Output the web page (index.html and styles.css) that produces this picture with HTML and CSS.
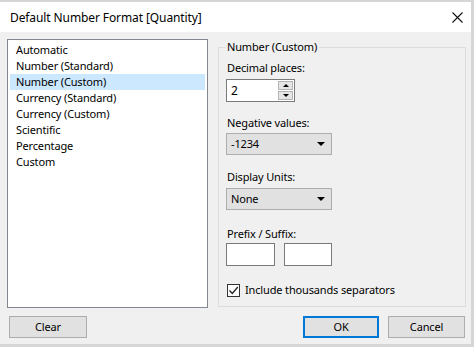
FILE: index.html
```html
<!DOCTYPE html>
<html lang="en">
<head>
<meta charset="utf-8">
<title>Default Number Format [Quantity]</title>
<link rel="stylesheet" href="styles.css">
</head>
<body>
<div class="window">
  <div class="titlebar">
    <span class="title">Default Number Format [Quantity]</span>
    <span class="close" aria-label="Close">
      <svg width="11" height="11" viewBox="0 0 11 11"><path d="M0.5 0.5 L10.5 10.5 M10.5 0.5 L0.5 10.5" stroke="#111" stroke-width="1.1" fill="none"/></svg>
    </span>
  </div>
  <div class="content">
    <div class="main">
      <ul class="listbox">
        <li>Automatic</li>
        <li>Number (Standard)</li>
        <li class="selected">Number (Custom)</li>
        <li>Currency (Standard)</li>
        <li>Currency (Custom)</li>
        <li>Scientific</li>
        <li>Percentage</li>
        <li>Custom</li>
      </ul>
      <fieldset class="group">
        <legend>Number (Custom)</legend>
        <div class="label l-decimal">Decimal places:</div>
        <div class="spinner">
          <span class="spin-value">2</span>
          <span class="spin-buttons">
            <span class="spin-btn"><span class="tri-up"></span></span>
            <span class="spin-btn"><span class="tri-down"></span></span>
          </span>
        </div>
        <div class="label l-negative">Negative values:</div>
        <div class="combo c-negative"><span class="combo-value">-1234</span><span class="tri-down combo-arrow"></span></div>
        <div class="label l-units">Display Units:</div>
        <div class="combo c-units"><span class="combo-value">None</span><span class="tri-down combo-arrow"></span></div>
        <div class="label l-prefix">Prefix / Suffix:</div>
        <div class="affix-row">
          <span class="textbox tb-prefix"></span>
          <span class="textbox tb-suffix"></span>
        </div>
        <div class="check-row">
          <span class="checkbox">
            <svg width="11" height="11" viewBox="0 0 11 11"><path d="M1.5 5.5 L4.3 8.5 L9.8 2" stroke="#222" stroke-width="1.3" fill="none"/></svg>
          </span>
          <span class="check-label">Include thousands separators</span>
        </div>
      </fieldset>
    </div>
    <div class="footer">
      <button class="btn btn-clear">Clear</button>
      <button class="btn btn-ok">OK</button>
      <button class="btn btn-cancel">Cancel</button>
    </div>
  </div>
</div>
</body>
</html>
```

FILE: styles.css
```css
* { box-sizing: border-box; }

html, body {
  margin: 0;
  padding: 0;
}

body {
  width: 474px;
  height: 347px;
  background: #d6d6d6;
  font-family: "Noto Sans", "Open Sans", "Liberation Sans", sans-serif;
  font-size: 11px;
  letter-spacing: -0.15px;
  color: #000;
  overflow: hidden;
  padding-top: 2px;
}

.window {
  width: 471px;
  height: 342px;
  background: #f0f0f0;
}

.titlebar {
  height: 30px;
  background: #fff;
  display: flex;
  align-items: center;
  padding-left: 10px;
}

.title {
  font-size: 12px;
  letter-spacing: -0.1px;
  line-height: 16px;
  padding-top: 1px;
}

.close {
  margin-left: auto;
  margin-right: 8px;
  width: 11px;
  height: 11px;
  display: flex;
}

.content {
  padding: 7px 5px 0 7px;
}

.main {
  display: flex;
  gap: 10px;
  align-items: flex-start;
}

.listbox {
  list-style: none;
  margin: 0;
  width: 201px;
  height: 269px;
  background: #fff;
  border: 1px solid #828790;
  padding: 2px 2px;
}

.listbox li {
  height: 16px;
  line-height: 16px;
  padding-left: 6px;
  white-space: nowrap;
}

.listbox li.selected {
  background: #cce8ff;
}

.group {
  margin: 0;
  width: 248px;
  height: 268px;
  border: 1px solid #dcdcdc;
  padding: 0 0 0 8px;
  min-width: 0;
}

.group legend {
  padding: 0 2px;
  margin-left: -2px;
  line-height: 16px;
}

.label {
  line-height: 16px;
  height: 16px;
  white-space: nowrap;
}

.l-decimal { margin-top: 5px; }
.l-negative { margin-top: 13px; }
.l-units { margin-top: 14px; }
.l-prefix { margin-top: 16px; }

.spinner {
  margin-top: 3px;
  margin-left: -1px;
  width: 69px;
  height: 23px;
  background: #fff;
  border: 1px solid #7a7a7a;
  display: flex;
  align-items: center;
  padding-left: 4px;
}

.spin-value {
  line-height: 16px;
  font-size: 12px;
}

.spin-buttons {
  margin-left: auto;
  width: 16px;
  height: 21px;
  display: flex;
  flex-direction: column;
  padding: 1px 1px 1px 0;
  gap: 1px;
}

.spin-btn {
  flex: 1;
  background: #e5e5e5;
  border: 1px solid #b4b4b4;
  display: flex;
  align-items: center;
  justify-content: center;
}

.tri-up {
  width: 0;
  height: 0;
  border-left: 3px solid transparent;
  border-right: 3px solid transparent;
  border-bottom: 3px solid #000;
}

.tri-down {
  width: 0;
  height: 0;
  border-left: 3px solid transparent;
  border-right: 3px solid transparent;
  border-top: 3px solid #000;
}

.combo {
  margin-left: -1px;
  width: 106px;
  height: 22px;
  background: #e1e1e1;
  border: 1px solid #adadad;
  display: flex;
  align-items: center;
  padding-left: 4px;
}

.c-negative { margin-top: 2px; }
.c-units { margin-top: 3px; }

.combo-value {
  line-height: 16px;
}

.combo-arrow {
  margin-left: auto;
  margin-right: 6px;
  border-left-width: 4px;
  border-right-width: 4px;
  border-top-width: 4px;
}

.affix-row {
  margin-top: 1px;
  margin-left: -1px;
  display: flex;
  gap: 9px;
}

.textbox {
  display: block;
  height: 23px;
  background: #fff;
  border: 1px solid #7a7a7a;
}

.tb-prefix { width: 49px; }
.tb-suffix { width: 48px; }

.check-row {
  margin-top: 16px;
  display: flex;
  align-items: center;
  height: 16px;
}

.checkbox {
  width: 13px;
  height: 13px;
  border: 1px solid #333;
  background: #fff;
  display: flex;
  align-items: center;
  justify-content: center;
}

.check-label {
  margin-left: 5px;
  line-height: 16px;
  white-space: nowrap;
}

.footer {
  margin-top: 8px;
  display: flex;
  padding-left: 2px;
  padding-right: 1px;
}

.btn {
  height: 22px;
  background: #e1e1e1;
  border: 1px solid #adadad;
  font-family: inherit;
  font-size: 11px;
  letter-spacing: -0.15px;
  color: #000;
  padding: 0;
  line-height: 16px;
}

.btn-clear { width: 78px; }

.btn-ok {
  margin-left: auto;
  width: 76px;
  border: 2px solid #0078d7;
}

.btn-cancel {
  width: 77px;
  margin-left: 9px;
}
```
